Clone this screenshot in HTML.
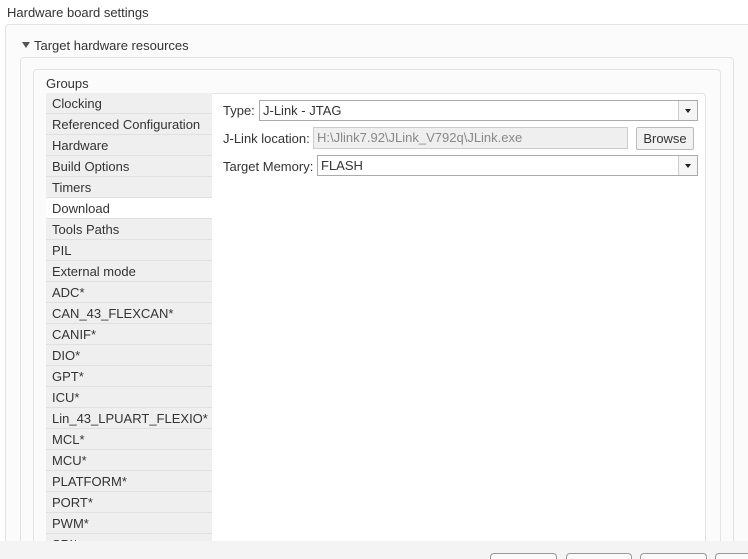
<!DOCTYPE html>
<html><head><style>
*{margin:0;padding:0;box-sizing:border-box}
html,body{width:748px;height:559px;overflow:hidden}
body{background:#fff;font-family:"Liberation Sans",Arial,sans-serif;font-size:13px;color:#333;position:relative}
.abs{position:absolute}
.title{left:7px;top:5px;font-size:13px}
.p1{left:5px;top:24px;width:760px;height:530px;border:1px solid #e3e3e3;border-radius:4px;background:#fbfbfb}
.sec{left:22px;top:38px;font-size:13px}
.tri{display:inline-block;width:0;height:0;border-left:4px solid transparent;border-right:4px solid transparent;border-top:6px solid #555;margin-right:4px;vertical-align:2px}
.p2{left:20px;top:57px;width:714px;height:500px;border:1px solid #e3e3e3;border-radius:4px;background:#fbfbfb}
.p3{left:33px;top:69px;width:688px;height:490px;border:1px solid #e3e3e3;border-radius:4px;background:#fbfbfb}
.groups{left:46px;top:76px;font-size:13px}
.list{left:46px;top:93px;width:167px;height:448px;overflow:hidden}
.row{height:21px;line-height:21px;padding-left:6px;background:#efefef;border-bottom:1px solid #e0e0e0;border-right:1px solid #e0e0e0;white-space:nowrap}
.row.sel{background:#fff;border-right:none}
.content{left:212px;top:93px;width:494px;height:450px;background:#fff;border-top:1px solid #e3e3e3;border-right:1px solid #e3e3e3;border-radius:0 4px 0 0}
.sel-box{height:21px;border:1px solid #aaa;background:#fff;line-height:19px;padding-left:3px}
.dd{position:absolute;right:0;top:0;width:19px;height:19px;border-left:1px solid #ccc;background:#f5f5f5}
.dd:after{content:"";position:absolute;left:6px;top:8px;border-left:3px solid transparent;border-right:3px solid transparent;border-top:4px solid #222}
.footer{left:0;top:541px;width:748px;height:18px;background:#f4f4f4;z-index:5}
.btn{top:553px;height:12px;border:1px solid #999;border-bottom:none;border-radius:4px 4px 0 0;background:#fafafa;z-index:6}
</style></head><body>
<div class="abs title">Hardware board settings</div>
<div class="abs p1"></div>
<div class="abs sec"><span class="tri"></span>Target hardware resources</div>
<div class="abs p2"></div>
<div class="abs p3"></div>
<div class="abs groups">Groups</div>
<div class="abs list">
<div class="row">Clocking</div>
<div class="row">Referenced Configuration</div>
<div class="row">Hardware</div>
<div class="row">Build Options</div>
<div class="row">Timers</div>
<div class="row sel">Download</div>
<div class="row">Tools Paths</div>
<div class="row">PIL</div>
<div class="row">External mode</div>
<div class="row">ADC*</div>
<div class="row">CAN_43_FLEXCAN*</div>
<div class="row">CANIF*</div>
<div class="row">DIO*</div>
<div class="row">GPT*</div>
<div class="row">ICU*</div>
<div class="row">Lin_43_LPUART_FLEXIO*</div>
<div class="row">MCL*</div>
<div class="row">MCU*</div>
<div class="row">PLATFORM*</div>
<div class="row">PORT*</div>
<div class="row">PWM*</div>
<div class="row">SPI*</div>
</div>
<div class="abs content"></div>
<div class="abs" style="left:223px;top:103px">Type:</div>
<div class="abs sel-box" style="left:259px;top:100px;width:439px">J-Link - JTAG<div class="dd"></div></div>
<div class="abs" style="left:223px;top:131px">J-Link location:</div>
<div class="abs" style="left:313px;top:127px;width:315px;height:22px;border:1px solid #ccc;background:#efefef;color:#888;line-height:20px;padding-left:3px">H:\Jlink7.92\JLink_V792q\JLink.exe</div>
<div class="abs" style="left:636px;top:127px;width:58px;height:23px;border:1px solid #bbb;border-radius:2px;background:#f2f2f2;text-align:center;line-height:21px">Browse</div>
<div class="abs" style="left:223px;top:159px">Target Memory:</div>
<div class="abs sel-box" style="left:317px;top:155px;width:381px">FLASH<div class="dd"></div></div>
<div class="abs footer"></div>
<div class="abs btn" style="left:490px;width:67px"></div>
<div class="abs btn" style="left:566px;width:66px"></div>
<div class="abs btn" style="left:640px;width:67px"></div>
<div class="abs btn" style="left:715px;width:40px"></div>
</body></html>
